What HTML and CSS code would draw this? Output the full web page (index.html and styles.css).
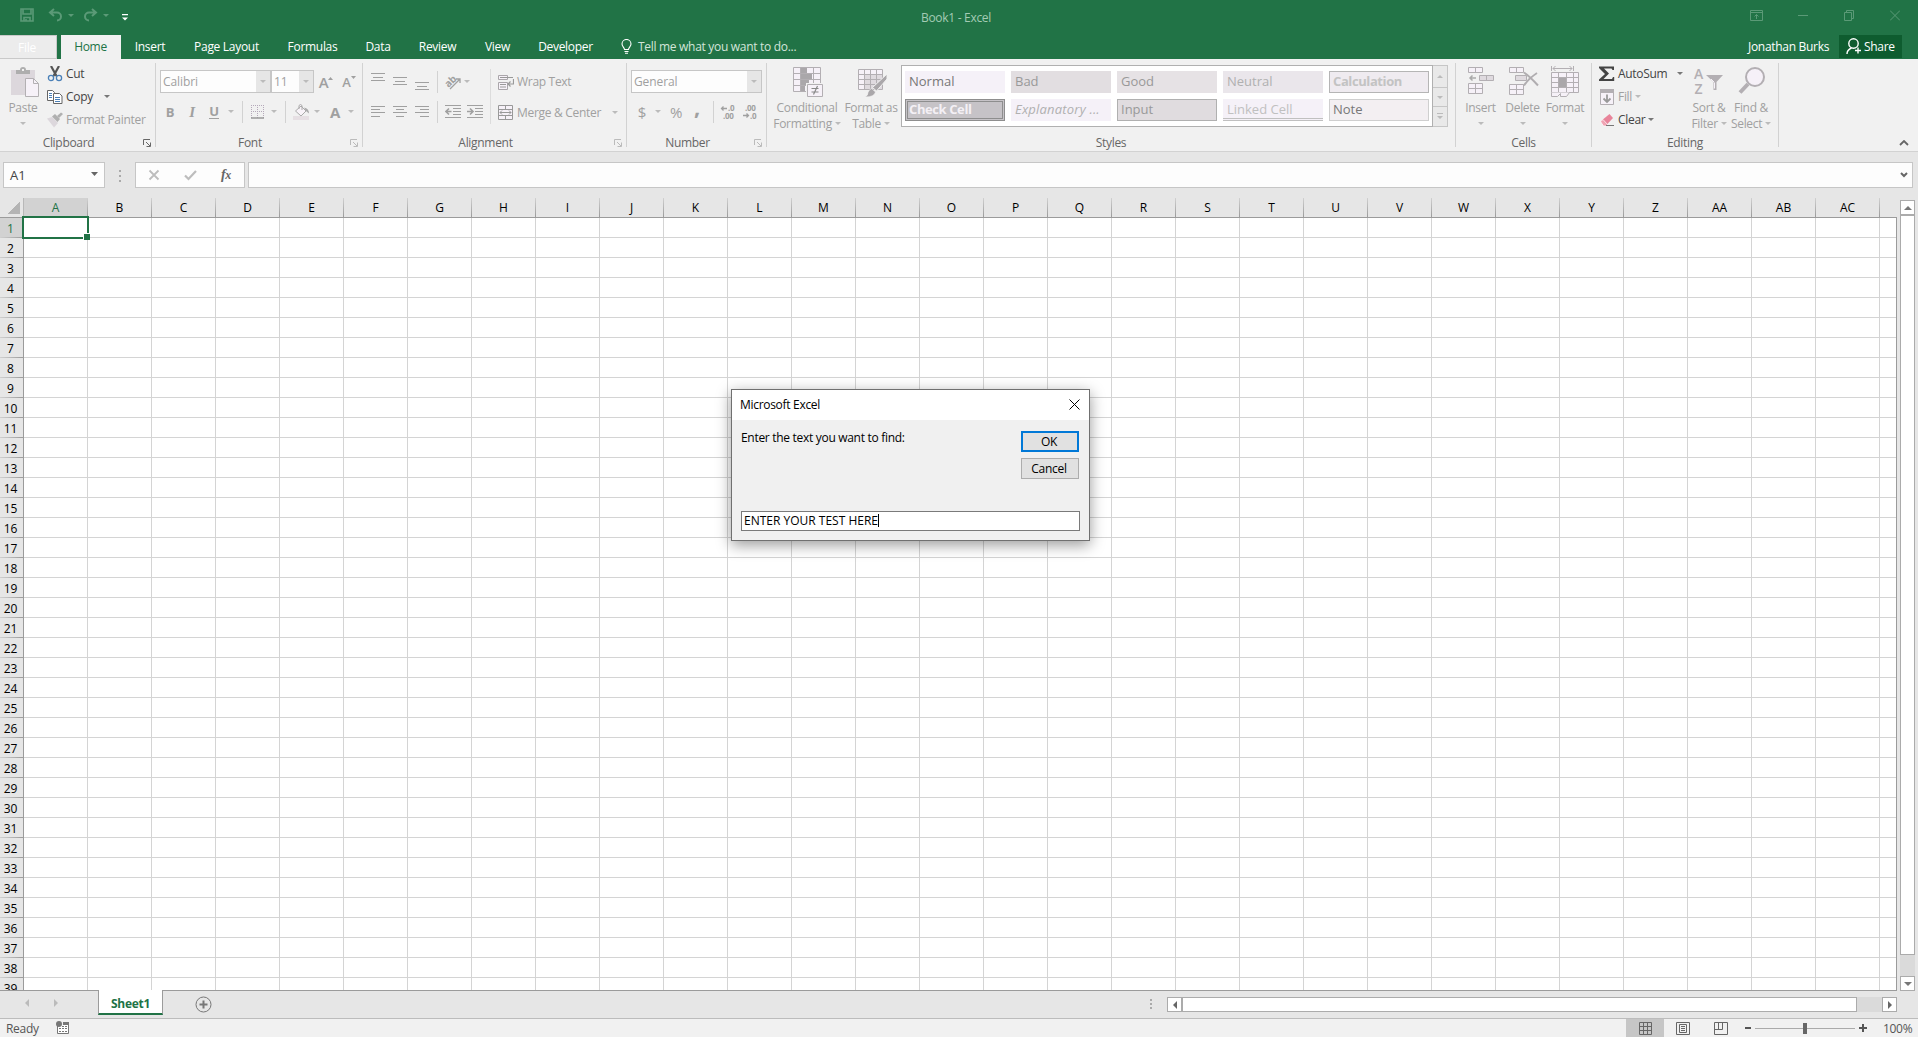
FILE: index.html
```html
<!DOCTYPE html>
<html lang="en">
<head>
  <meta charset="UTF-8">
  <meta name="viewport" content="width=device-width, initial-scale=1.0">
  <title>Book1 - Excel</title>
  <link rel="stylesheet" href="styles.css">
</head>
<body>

<header class="titlebar">
  <div class="quick">
    <svg width="14" height="14" viewBox="0 0 14 14"><path d="M1 1h12v12H1zM3 1v5h8V1M4 13V9.500h6V13M6 11v2" fill="none" stroke="currentColor" stroke-width="1.600"/></svg>
    <svg class="undo" width="15" height="14" viewBox="0 0 15 14"><path d="M6 1L2 4.500 6 8M2 4.500h7a4 4 0 0 1 0 8" fill="none" stroke="currentColor" stroke-width="2"/></svg>
    <i class="caret"></i>
    <svg class="redo" width="15" height="14" viewBox="0 0 15 14"><path d="M9 1l4 3.500L9 8M13 4.500H6a4 4 0 0 0 0 8" fill="none" stroke="currentColor" stroke-width="2"/></svg>
    <i class="caret"></i>
    <svg class="customize" width="6" height="7" viewBox="0 0 6 7"><path d="M0 0h6v1.200H0zM0 3.500h6L3 6.500z" fill="#fff"/></svg>
  </div>
  <div class="doc-title">Book1 - Excel</div>
  <div class="win-buttons">
    <svg class="ribbon-opts" width="14" height="11" viewBox="0 0 14 11"><path d="M.5.5h12v10H.5zM.5 2.500h12M6.500 9V4.500M4.500 6.500l2-2 2 2" fill="none" stroke="currentColor"/></svg>
    <svg width="10" height="11" viewBox="0 0 10 11"><path d="M0 5.500h10" stroke="currentColor"/></svg>
    <svg width="10" height="11" viewBox="0 0 10 11"><path d="M.5 2.500h7v8h-7zM2.500 2.500v-2h7v8h-2" fill="none" stroke="currentColor"/></svg>
    <svg width="10" height="11" viewBox="0 0 10 11"><path d="M0 .5l10 10M10 .5l-10 10" stroke="currentColor"/></svg>
  </div>
</header>

<nav class="tabs">
  <div class="tab-file">File</div>
  <div class="tab-list">
    <a class="active">Home</a>
    <a>Insert</a>
    <a>Page Layout</a>
    <a>Formulas</a>
    <a>Data</a>
    <a>Review</a>
    <a>View</a>
    <a>Developer</a>
  </div>
  <div class="tell-me">
    <svg width="11" height="15" viewBox="0 0 11 15"><path d="M3.500 10.500c0-2-2.500-3-2.500-5.500a4.500 4.500 0 0 1 9 0c0 2.500-2.500 3.500-2.500 5.500zM3.500 12.500h4M4 14.300h3" fill="none" stroke="#fff" stroke-width="1.100"/></svg>
    <span>Tell me what you want to do...</span>
  </div>
  <div class="user">Jonathan Burks</div>
  <div class="share">
    <svg width="16" height="17" viewBox="0 0 16 17"><circle cx="7.500" cy="5.500" r="4.700" fill="none" stroke="#fff" stroke-width="1.400"/><path d="M1 16c0-3 2-5 4.500-6M12 9.500v6M9 12.500h6" fill="none" stroke="#fff" stroke-width="1.400"/></svg>
    <span>Share</span>
  </div>
</nav>

<section class="ribbon">

  <div class="group g-clipboard">
    <div class="group-body">
      <div class="big disabled">
        <svg width="40" height="34" viewBox="0 0 40 34">
          <path d="M8 4h24v25H8z" fill="#dcd7dc"/>
          <path d="M13 4h4q0-3 3-3t3 3h4v4H13z" fill="#aeaeae"/><path d="M19 3h2v2h-2z" fill="#f1f1f1"/>
          <path d="M22.500 12.500h8l5 5v13h-13z" fill="#f6f1f8" stroke="#b3b0b3"/><path d="M30.500 12.500v5h5" fill="none" stroke="#b3b0b3"/>
        </svg>
        <span>Paste</span>
        <span><i class="caret"></i></span>
      </div>
      <div class="stack">
        <div class="item">
          <svg width="16" height="16" viewBox="0 0 16 16"><path d="M4 0l5.500 10M12 0L6.500 10" stroke="#555" stroke-width="2.200" fill="none"/><circle cx="4" cy="12" r="2.600" fill="none" stroke="#4a80b8" stroke-width="1.300"/><circle cx="12" cy="12" r="2.600" fill="none" stroke="#4a80b8" stroke-width="1.300"/></svg>
          <span>Cut</span>
        </div>
        <div class="item">
          <svg width="16" height="16" viewBox="0 0 16 16"><path d="M.5 1.500h5l2 2v8h-7z" fill="#fff" stroke="#666"/><path d="M2 4.500h3M2 6.500h3M2 8.500h3" stroke="#4a80b8"/><path d="M6.500 4.500h6l2.500 2.500v7.500H6.500z" fill="#fff" stroke="#666"/><path d="M8 8.500h5M8 10.500h5M8 12.500h5" stroke="#4a80b8"/></svg>
          <span>Copy</span>
          <i class="caret copy-caret"></i>
        </div>
        <div class="item disabled">
          <svg width="16" height="16" viewBox="0 0 16 16"><path d="M0 6.500l5-1.500 6 6-4 4.500z" fill="#dcd7dc"/><path d="M5 4.500l3-2.500 5 5-2.500 3z" fill="#b0b0b0"/><path d="M10 4l4-3.500L16 2l-4 4z" fill="#b0b0b0"/></svg>
          <span>Format Painter</span>
        </div>
      </div>
    </div>
    <div class="group-label"><span>Clipboard</span><svg class="launcher" width="8" height="8" viewBox="0 0 8 8"><path d="M.5 6V.5H7M3 3l4 4M7.500 3.500v4h-4" fill="none" stroke="currentColor"/></svg></div>
  </div>

  <div class="group g-font">
    <div class="group-body lines disabled">
      <div class="line font-line1">
        <div class="combo"><span>Calibri</span><b><i class="caret"></i></b></div>
        <div class="combo"><span>11</span><b><i class="caret"></i></b></div>
        <div class="glyph grow">A<svg width="5" height="3" viewBox="0 0 5 3"><path d="M0 3h5L2.500 0z" fill="currentColor"/></svg></div>
        <div class="glyph shrink">A<svg width="5" height="3" viewBox="0 0 5 3"><path d="M0 0h5L2.500 3z" fill="currentColor"/></svg></div>
      </div>
      <div class="line font-line2">
        <b class="glyph">B</b>
        <em class="glyph serif">I</em>
        <b class="glyph under">U</b>
        <i class="caret"></i>
        <i class="sep"></i>
        <svg width="13" height="14" viewBox="0 0 13 14"><path d="M.5 0v13M6.500 0v13M12.500 0v13M0 .5h13M0 6.500h13" stroke="#b5a9ba" stroke-dasharray="1 1"/><path d="M0 13h13" stroke="#999" stroke-width="1.500"/></svg>
        <i class="caret"></i>
        <i class="sep"></i>
        <svg width="17" height="16" viewBox="0 0 17 16"><path d="M0 12h16v4H0z" fill="#e6dfe3"/><path d="M2.500 7L8 2l5 5-5 5zM6 5V1.500q1.500-2 3 0V6" fill="#f8f3f8" stroke="#aaa"/><path d="M11 3.500q5 1 5 6l-3-2.500z" fill="#aaa"/></svg>
        <i class="caret"></i>
        <b class="glyph big-a">A</b>
        <i class="caret"></i>
      </div>
    </div>
    <div class="group-label"><span>Font</span><svg class="launcher dim" width="8" height="8" viewBox="0 0 8 8"><path d="M.5 6V.5H7M3 3l4 4M7.500 3.500v4h-4" fill="none" stroke="currentColor"/></svg></div>
  </div>

  <div class="group g-align">
    <div class="group-body disabled">
      <div class="lines align-left">
        <div class="line align-grid">
          <svg width="14" height="20" viewBox="0 0 14 20"><path d="M0 1.500h14M2 5.500h10M0 8.500h14" stroke="currentColor"/></svg>
          <svg width="14" height="20" viewBox="0 0 14 20"><path d="M0 5.500h14M2 9.500h10M0 12.500h14" stroke="currentColor"/></svg>
          <svg width="14" height="20" viewBox="0 0 14 20"><path d="M0 10.500h14M2 14.500h10M0 17.500h14" stroke="currentColor"/></svg>
          <i class="sep"></i>
          <svg class="orient" width="22" height="22" viewBox="-3 -3 22 22"><text x="-1" y="11" class="ab" transform="rotate(-45 5 7)">ab</text><path d="M5 15l10-10M15 9V5h-4" fill="none" stroke="currentColor" stroke-width="1.300"/></svg>
          <i class="caret orient-caret"></i>
        </div>
        <div class="line align-grid">
          <svg width="14" height="12" viewBox="0 0 14 12"><path d="M0 .5h14M0 3.500h9M0 6.500h14M0 10.500h9" stroke="currentColor"/></svg>
          <svg width="14" height="12" viewBox="0 0 14 12"><path d="M0 .5h14M3 3.500h8M0 6.500h14M3 10.500h8" stroke="currentColor"/></svg>
          <svg width="14" height="12" viewBox="0 0 14 12"><path d="M0 .5h14M5 3.500h9M0 6.500h14M5 10.500h9" stroke="currentColor"/></svg>
          <i class="sep"></i>
          <svg width="16" height="14" viewBox="0 0 16 14"><path d="M0 .5h16M8 3.500h8M8 6.500h8M8 9.500h8M0 12.500h16" stroke="currentColor"/><path d="M6.500 6.500H1M4 3.500l-3 3 3 3" fill="none" stroke="currentColor" stroke-width="1.600"/></svg>
          <svg width="16" height="14" viewBox="0 0 16 14"><path d="M0 .5h16M8 3.500h8M8 6.500h8M8 9.500h8M0 12.500h16" stroke="currentColor"/><path d="M0 6.500h5.500M3 3.500l3 3-3 3" fill="none" stroke="currentColor" stroke-width="1.600"/></svg>
        </div>
      </div>
      <div class="lines align-right">
        <div class="line item">
          <svg width="16" height="16" viewBox="0 0 16 16"><path d="M.5 1.500h9v4h-9zM.5 8.500h9v7h-9z" fill="#f6f1f8" stroke="#aaa6aa"/><path d="M2 3.500h13M2 10.500h6M2 13h6" stroke="#999"/><path d="M15.500 5v5h-5M12.500 7.500L10 10l2.500 2.500" fill="none" stroke="#999" stroke-width="1.200"/></svg>
          <span>Wrap Text</span>
        </div>
        <div class="line item">
          <svg width="16" height="16" viewBox="0 0 16 16"><path d="M.5.500h14v14H.5z" fill="#f6f1f8" stroke="#999"/><path d="M.5 4.500h14M.5 10.500h14M7.500.5v4M7.500 10.500v4M2 7.500h11M4 5.500l-2 2 2 2M11 5.500l2 2-2 2" fill="none" stroke="#999"/></svg>
          <span class="merge-text">Merge &amp; Center</span>
          <i class="caret"></i>
        </div>
      </div>
    </div>
    <div class="group-label"><span>Alignment</span><svg class="launcher dim" width="8" height="8" viewBox="0 0 8 8"><path d="M.5 6V.5H7M3 3l4 4M7.500 3.500v4h-4" fill="none" stroke="currentColor"/></svg></div>
  </div>

  <div class="group g-number">
    <div class="group-body lines disabled">
      <div class="line number-line1">
        <div class="combo"><span>General</span><b><i class="caret"></i></b></div>
      </div>
      <div class="line number-line2">
        <span class="glyph dollar">$</span>
        <i class="caret"></i>
        <span class="glyph percent">%</span>
        <b class="glyph comma">,</b>
        <i class="sep"></i>
        <svg width="20" height="22" viewBox="-3 -4 20 22"><path d="M6 3.500H.5M2.500 1.500l-2 2 2 2" fill="none" stroke="currentColor" stroke-width="1.300"/><text x="7" y="6" class="dec">.0</text><text x="2" y="13.500" class="dec">.00</text></svg>
        <svg width="20" height="22" viewBox="-3 -4 20 22"><text x="2" y="6" class="dec">.00</text><path d="M0 10.500h5.500M3.500 8.500l2 2-2 2" fill="none" stroke="currentColor" stroke-width="1.300"/><text x="7" y="13.500" class="dec">.0</text></svg>
      </div>
    </div>
    <div class="group-label"><span>Number</span><svg class="launcher dim" width="8" height="8" viewBox="0 0 8 8"><path d="M.5 6V.5H7M3 3l4 4M7.500 3.500v4h-4" fill="none" stroke="currentColor"/></svg></div>
  </div>

  <div class="group g-styles">
    <div class="group-body">
      <div class="big disabled">
        <svg width="76" height="34" viewBox="0 0 76 34">
          <path d="M24.500 1.500h27v24h-27z" fill="#f6f1f8" stroke="#b3afb3"/>
          <path d="M24.500 7.500h27M24.500 13.500h27M24.500 19.500h27M31.500 1.500v24M37.500 1.500v24M44.500 1.500v24" stroke="#b3afb3"/>
          <path d="M32 2h6v5h-6zM32 8h11v5H32zM32 14h8v5h-8zM32 20h4v5h-4z" fill="#aaa7aa"/>
          <path d="M38.500 18.500h15v12h-15z" fill="#f6f1f8" stroke="#f1f1f1" stroke-width="3"/>
          <path d="M38.500 18.500h15v12h-15z" fill="#f6f1f8" stroke="#b3afb3"/>
          <path d="M42.500 22.500h7M42.500 26h7M48.500 20l-4 8.500" stroke="#888" stroke-width="1.200"/>
        </svg>
        <span>Conditional</span>
        <span>Formatting <i class="caret"></i></span>
      </div>
      <div class="big table-btn disabled">
        <svg width="52" height="34" viewBox="0 0 52 34">
          <path d="M13.500 3.500h24v20h-24z" fill="#f6f1f8" stroke="#b3afb3"/>
          <path d="M20 9h17v14H20z" fill="#dfdadf"/>
          <path d="M13.500 8.500h24M13.500 13.500h24M13.500 18.500h24M19.500 3.500v20M25.500 3.500v20M31.500 3.500v20" stroke="#b3afb3"/>
          <path d="M42 8v5L31.500 25l-4-3.500z" fill="#aaa7aa" stroke="#f1f1f1"/>
          <path d="M26.500 22.500l4 3.500q-1 5-10.500 5 3-1.500 3-4.500 1-3 3.500-4z" fill="#aaa7aa" stroke="#f1f1f1" stroke-width=".6"/>
        </svg>
        <span>Format as</span>
        <span>Table <i class="caret"></i></span>
      </div>
      <div class="gallery">
        <div class="swatches">
          <div class="sw normal">Normal</div>
          <div class="sw bad">Bad</div>
          <div class="sw good">Good</div>
          <div class="sw neutral">Neutral</div>
          <div class="sw calculation">Calculation</div>
          <div class="sw check">Check Cell</div>
          <div class="sw explanatory">Explanatory ...</div>
          <div class="sw input">Input</div>
          <div class="sw linked">Linked Cell</div>
          <div class="sw note">Note</div>
        </div>
        <div class="gallery-scroll">
          <div><i class="caret up"></i></div>
          <div><i class="caret"></i></div>
          <div><svg width="6" height="7" viewBox="0 0 6 7"><path d="M0 0h6v1H0zM0 3h6L3 6z" fill="#bbb"/></svg></div>
        </div>
      </div>
    </div>
    <div class="group-label"><span>Styles</span></div>
  </div>

  <div class="group g-cells">
    <div class="group-body disabled">
      <div class="big insert-btn">
        <svg width="41" height="34" viewBox="0 0 41 34" fill="#f6f1f8" stroke="#b3afb3">
          <path d="M8.500 1.500h14v5h-14zM15.500 1.500v5"/>
          <path d="M19.500 9.500h14v5h-14zM26.500 9.500v5" fill="#dfdadf"/>
          <path d="M16 12H10M12.500 9.500L10 12l2.500 2.500" fill="none" stroke="#aaa" stroke-width="1.500"/>
          <path d="M8.500 17.500h14v10h-14zM15.500 17.500v10M8.500 22.500h14"/>
        </svg>
        <span>Insert</span>
        <span><i class="caret"></i></span>
      </div>
      <div class="big delete-btn">
        <svg width="43" height="34" viewBox="0 0 43 34" fill="#f6f1f8" stroke="#b3afb3">
          <path d="M8.500 1.500h14v5h-14zM15.500 1.500v5"/>
          <path d="M14.500 9.500h11v5h-11z" fill="#dfdadf"/>
          <path d="M8.500 18.500h14v10h-14zM15.500 18.500v10M8.500 23.500h14"/>
          <path d="M23 6.500q6 4 14 13M36 7q-8 5-13 12.500" fill="none" stroke="#b0adb0" stroke-width="2"/>
        </svg>
        <span>Delete</span>
        <span><i class="caret"></i></span>
      </div>
      <div class="big format-btn">
        <svg width="42" height="34" viewBox="0 0 42 34" fill="#f6f1f8" stroke="#b3afb3">
          <path d="M7.500 0v5M29.500 0v5M9 2.500h19M11.500 0L9 2.500 11.500 5M25.500 0L28 2.500 25.500 5" fill="none"/>
          <path d="M7.500 6.500h27v20h-27zM7.500 11.500h27M7.500 21.500h27M14.500 6.500v20M22.500 6.500v20M29.500 6.500v20M7.500 16.500h27"/>
          <path d="M15 12h7v9h-7z" fill="#aaa7aa" stroke="none"/>
          <path d="M7.500 26.500v4h6l3-3v3h6l3-4" />
        </svg>
        <span>Format</span>
        <span><i class="caret"></i></span>
      </div>
    </div>
    <div class="group-label"><span>Cells</span></div>
  </div>

  <div class="group g-editing">
    <div class="group-body">
      <div class="stack">
        <div class="item">
          <svg width="16" height="16" viewBox="0 0 16 16"><path d="M0 .5h15v3.500h-1.500L12.500 2.500H5l5 5L4.500 13H13l1-2h1.200v4H0v-1.500L6 8 0 2z" fill="#444"/></svg>
          <span>AutoSum</span>
          <i class="caret sum-caret"></i>
        </div>
        <div class="item disabled">
          <svg width="16" height="16" viewBox="0 0 16 16"><path d="M1.500.5h13v15h-13z" fill="#f6f1f8" stroke="#b3afb3"/><path d="M1 0h14v4H1z" fill="#b3afb3"/><path d="M8 5.500v7M4.500 9.500L8 13l3.500-3.500" fill="none" stroke="#999" stroke-width="1.800"/></svg>
          <span>Fill</span>
          <i class="caret"></i>
        </div>
        <div class="item">
          <svg width="16" height="16" viewBox="0 0 16 16"><path d="M2 9l8.500-7 3.500 4-7 7.500z" fill="#e8849a"/><path d="M1.500 9.500l2.500-2 4.500 5L7 14H4.500z" fill="#f0a3b3" stroke="#fff" stroke-width=".7"/><path d="M7 13.500h8" stroke="#777"/></svg>
          <span>Clear</span>
          <i class="caret"></i>
        </div>
      </div>
      <div class="big sort-btn disabled">
        <svg width="38" height="34" viewBox="0 0 38 34">
          <text x="4" y="13" class="az">A</text><text x="4.500" y="28" class="az">Z</text>
          <path d="M16 9h17l-6.500 7v8h-3v-8z" fill="#b3afb3"/><path d="M24.500 16.500v6M21 13l3 3" stroke="#f6f1f8"/>
        </svg>
        <span>Sort &amp;</span>
        <span>Filter <i class="caret"></i></span>
      </div>
      <div class="big find-btn disabled">
        <svg width="44" height="34" viewBox="0 0 44 34">
          <circle cx="26" cy="11" r="9" fill="#f6f1f8" stroke="#b3afb3" stroke-width="2"/><path d="M19 18l-8 8.500" stroke="#b3afb3" stroke-width="4"/>
        </svg>
        <span>Find &amp;</span>
        <span>Select <i class="caret"></i></span>
      </div>
    </div>
    <div class="group-label"><span>Editing</span></div>
  </div>

  <svg class="collapse" width="10" height="6" viewBox="0 0 10 6"><path d="M1 5l4-4 4 4" fill="none" stroke="#666" stroke-width="1.800"/></svg>
</section>

<section class="formula-bar">
  <div class="name-box"><span>A1</span><svg width="7" height="4" viewBox="0 0 7 4"><path d="M0 0h7L3.500 4z" fill="#666"/></svg></div>
  <div class="dots"><i></i><i></i><i></i></div>
  <div class="fx-buttons">
    <svg width="12" height="12" viewBox="0 0 12 12"><path d="M1.500 1.500l9 9M10.500 1.500l-9 9" stroke="#bdbdbd" stroke-width="1.800"/></svg>
    <svg width="13" height="12" viewBox="0 0 13 12"><path d="M1 6.500l3.500 3.500L12 2" fill="none" stroke="#bdbdbd" stroke-width="2.200"/></svg>
    <span class="fx">f<small>x</small></span>
  </div>
  <div class="formula-input"><svg width="8" height="6" viewBox="0 0 8 6"><path d="M1 1l3 3 3-3" fill="none" stroke="#666" stroke-width="2"/></svg></div>
</section>

<main class="workspace">
  <div class="sheet">
    <div class="col-heads" id="cols"><div class="corner"></div></div>
    <div class="sheet-body">
      <div class="row-heads" id="rows"></div>
      <div class="cells"><div class="selection"></div></div>
    </div>
  </div>
  <div class="vscroll">
    <div class="sb-btn"><i class="caret up"></i></div>
    <div class="v-thumb"></div>
    <div class="sb-btn v-down"><i class="caret"></i></div>
  </div>
</main>

<section class="sheet-bar">
  <svg class="nav-prev" width="4" height="8" viewBox="0 0 4 8"><path d="M4 0v8L0 4z" fill="#bbb"/></svg>
  <svg class="nav-next" width="4" height="8" viewBox="0 0 4 8"><path d="M0 0v8l4-4z" fill="#bbb"/></svg>
  <div class="sheet-tab">Sheet1</div>
  <svg class="add-sheet" width="17" height="17" viewBox="0 0 17 17"><circle cx="8.500" cy="8.500" r="7.500" fill="none" stroke="#777"/><path d="M8.500 4.500v8M4.500 8.500h8" stroke="#777" stroke-width="2"/></svg>
  <div class="dots sheet-dots"><i></i><i></i><i></i></div>
  <div class="hscroll">
    <div class="sb-btn"><svg width="4" height="8" viewBox="0 0 4 8"><path d="M4 0v8L0 4z" fill="#666"/></svg></div>
    <div class="h-thumb"></div>
    <div class="sb-btn h-right"><svg width="4" height="8" viewBox="0 0 4 8"><path d="M0 0v8l4-4z" fill="#666"/></svg></div>
  </div>
</section>

<footer class="status">
  <span class="ready">Ready</span>
  <svg class="macro" width="14" height="13" viewBox="0 0 14 13"><path d="M1.500 5v7.500h11V4" fill="#fff" stroke="#777"/><path d="M7 1h6v3H7z" fill="#777"/><path d="M3 7.500h2M6 7.500h2M9 7.500h2M3 10.500h2M6 10.500h2M9 10.500h2M6 5.500h2M9 5.500h2" stroke="#777"/><circle cx="3" cy="3" r="3" fill="#777"/></svg>
  <div class="views">
    <div class="view on"><svg width="13" height="13" viewBox="0 0 13 13"><path d="M.5.5h12v12H.5zM4.500.5v12M8.500.5v12M.5 4.500h12M.5 8.500h12" fill="none" stroke="#666"/></svg></div>
    <div class="view"><svg width="14" height="13" viewBox="0 0 14 13"><path d="M.5.5h13v12H.5zM3.500 2.500h7v8h-7zM5 4.500h4M5 6.500h4M5 8.500h4" fill="none" stroke="#666"/></svg></div>
    <div class="view"><svg width="14" height="13" viewBox="0 0 14 13"><path d="M.5.5h13v12H.5zM.5 7.500h8v-7M4.500.5v7" fill="none" stroke="#666"/></svg></div>
  </div>
  <div class="zoom">
    <i class="minus"></i>
    <div class="slider"><i></i></div>
    <svg width="8" height="8" viewBox="0 0 8 8"><path d="M4 0v8M0 4h8" stroke="#555" stroke-width="2"/></svg>
    <span>100%</span>
  </div>
</footer>

<div class="dialog">
  <div class="dialog-title">
    <span>Microsoft Excel</span>
    <svg width="11" height="11" viewBox="0 0 11 11"><path d="M.5.5l10 10M10.500.5l-10 10" stroke="#000"/></svg>
  </div>
  <div class="dialog-body">
    <div class="dialog-top">
      <div class="prompt">Enter the text you want to find:</div>
      <div class="dialog-buttons">
        <button class="default">OK</button>
        <button>Cancel</button>
      </div>
    </div>
    <div class="dialog-input"><span>ENTER YOUR TEST HERE</span></div>
  </div>
</div>

<script>
  const cols = document.getElementById('cols');
  const rows = document.getElementById('rows');

  function colName(n) {
    const letter = String.fromCharCode(65 + n % 26);
    return n < 26 ? letter : 'A' + letter;
  }

  for (let i = 0; i < 29; i++) {
    cols.innerHTML += `<div class="col-head${i === 0 ? ' on' : ''}">${colName(i)}</div>`;
  }

  for (let i = 1; i <= 39; i++) {
    rows.innerHTML += `<div class="row-head${i === 1 ? ' on' : ''}">${i}</div>`;
  }
</script>

</body>
</html>
```
FILE: styles.css
```css
* {
  box-sizing: border-box;
}
body {
  margin: 0;
  width: 1918px;
  height: 1037px;
  overflow: hidden;
  display: flex;
  flex-direction: column;
  font-family: "Open Sans", "Noto Sans", sans-serif;
  font-size: 12px;
  letter-spacing: -0.3px;
  color: #444;
  background: #e6e6e6;
  white-space: nowrap;
}
svg {
  display: block;
  flex: none;
}
.caret {
  display: inline-block;
  flex: none;
  width: 0;
  height: 0;
  border-left: 3px solid transparent;
  border-right: 3px solid transparent;
  border-top: 3px solid #777;
}
.caret.up {
  border-top: 0;
  border-bottom: 3px solid #777;
}
.disabled {
  color: #a0a0a0;
}
.disabled .caret,
.gallery .caret {
  border-top-color: #bbb;
}
.gallery .caret.up {
  border-bottom-color: #bbb;
}

/* title bar */
.titlebar {
  height: 35px;
  background: #217346;
  display: grid;
  grid-template-columns: 1fr auto 1fr;
  color: #5b9a77;
}
.quick {
  display: flex;
  align-items: center;
  padding: 0 0 5px 20px;
}
.quick .caret {
  border-top-color: #5b9a77;
  margin-left: 5px;
}
.undo {
  margin-left: 14px;
}
.redo {
  margin-left: 9px;
}
.customize {
  margin: 4px 0 0 13px;
}
.doc-title {
  color: #a3cbb4;
  line-height: 35px;
  padding-right: 6px;
}
.win-buttons {
  display: flex;
  justify-content: flex-end;
  align-items: flex-start;
  gap: 36px;
  padding: 10px 18px 0 0;
}
.ribbon-opts {
  margin-right: -2px;
}

/* tabs */
.tabs {
  height: 24px;
  background: #217346;
  display: flex;
  line-height: 24px;
  color: #fff;
}
.tab-file {
  width: 57px;
  background: #ececec;
  border: 1px solid #c9c9c9;
  border-left: 0;
  text-align: center;
  padding-right: 2px;
}
.tab-list {
  margin-left: 4px;
  display: grid;
  grid-template-columns: 60px 59px 94px 78px 53px 66px 54px 82px;
  text-align: center;
}
.tab-list a {
  padding-right: 1px;
}
.tab-list .active {
  background: #f1f1f1;
  color: #217346;
}
.tell-me {
  display: flex;
  align-items: center;
  gap: 6px;
  padding-left: 14px;
  color: #d3e5da;
}
.tell-me svg {
  margin-bottom: 2px;
}
.user {
  margin-left: auto;
  width: 91px;
}
.share {
  width: 63px;
  height: 23px;
  margin-right: 16px;
  background: #0e5c2f;
  display: flex;
  align-items: center;
  gap: 2px;
  padding-left: 7px;
}

/* ribbon */
.ribbon {
  height: 93px;
  background: #f1f1f1;
  border-bottom: 1px solid #d2d2d2;
  display: flex;
  padding: 4px 0;
}
.group {
  border-right: 1px solid #d2d2d2;
  display: flex;
  flex-direction: column;
}
.g-clipboard { width: 156px; }
.g-font { width: 207px; }
.g-align { width: 264px; }
.g-number { width: 140px; }
.g-styles { width: 689px; }
.g-cells { width: 136px; }
.g-editing { width: 187px; }
.group-body {
  height: 71px;
  display: flex;
}
.group-label {
  height: 14px;
  line-height: 19px;
  display: flex;
  justify-content: center;
  color: #666;
}
.group-label span {
  flex: 1;
  text-align: center;
}
.launcher {
  margin: 6px 4px 0 6px;
}
.launcher.dim {
  color: #bbb;
}
.big {
  width: 76px;
  margin-top: 3px;
  display: flex;
  flex-direction: column;
  align-items: center;
  line-height: 16px;
}
.big span {
  height: 16px;
}
.big .caret {
  vertical-align: 3px;
}
.g-clipboard .group-body {
  padding-left: 3px;
  gap: 4px;
}
.g-clipboard .big {
  width: 40px;
}
.stack {
  margin-top: -1px;
}
.item {
  height: 23px;
  display: flex;
  align-items: center;
  gap: 3px;
}
.item span {
  margin-top: -1px;
}
.copy-caret {
  margin-left: 8px;
}

.lines {
  flex-direction: column;
  display: flex;
  gap: 7px;
  padding-top: 7px;
}
.line {
  height: 23px;
  display: grid;
  align-items: center;
  justify-items: center;
}
.line.item {
  display: flex;
}
.sep {
  width: 1px;
  height: 22px;
  background: #d2d2d2;
}
.combo {
  width: 100%;
  height: 23px;
  background: #fdfdfd;
  border: 1px solid #c6c6c6;
  display: flex;
  align-items: center;
  justify-content: space-between;
  padding-left: 2px;
}
.combo span {
  letter-spacing: -0.1px;
}
.combo b {
  width: 14px;
  height: 21px;
  background: #e6e6e6;
  display: flex;
  align-items: center;
  justify-content: center;
}
.font-line1 {
  padding-left: 4px;
  grid-template-columns: 111px 43px 24px 22px;
}
.font-line2 {
  padding-left: 3px;
  grid-template-columns: 22px 22px 22px 12px 10px 21px 12px 10px 23px 8px 28px 4px;
}
.glyph {
  font-size: 13px;
  line-height: 20px;
}
.glyph svg {
  display: inline-block;
  vertical-align: 8px;
}
.grow {
  font-size: 15px;
  font-weight: 600;
}
.shrink {
  font-size: 13px;
  font-weight: 600;
}
.serif {
  font-family: "Liberation Serif", serif;
  font-weight: bold;
  font-size: 15px;
}
.under {
  line-height: 13px;
  border-bottom: 1px solid #a0a0a0;
}
.big-a {
  font-size: 15px;
}
.ab {
  font-size: 10px;
  font-weight: bold;
  fill: currentColor;
}
.align-left {
  width: 127px;
  padding-left: 4px;
}
.align-grid {
  grid-template-columns: 22px 22px 22px 9px 22px 22px;
}
.orient-caret {
  justify-self: start;
}
.align-right {
  margin-top: 6px;
  padding: 1px 0 0 7px;
  height: 55px;
  gap: 8px;
  border-left: 1px solid #dcdcdc;
}
.merge-text {
  width: 92px;
}
.number-line1 {
  padding-left: 4px;
  grid-template-columns: 131px;
}
.number-line2 {
  padding-left: 4px;
  grid-template-columns: 22px 10px 26px 16px 16px 14px 30px;
}
.dollar,
.percent {
  font-size: 15px;
}
.comma {
  font-size: 22px;
  margin-top: -12px;
}
.dec {
  font-size: 8px;
  font-weight: bold;
  fill: currentColor;
}

.g-styles .group-body {
  padding-left: 2px;
}
.table-btn {
  width: 52px;
}
.gallery {
  margin: 2px 0 0 4px;
  height: 62px;
  display: flex;
}
.swatches {
  width: 532px;
  background: #fff;
  border: 1px solid #b0b0b0;
  padding: 5px 3px;
  display: grid;
  grid-template-columns: repeat(5, 100px);
  grid-auto-rows: 22px;
  gap: 6px;
}
.sw {
  font-size: 13px;
  letter-spacing: 0;
  line-height: 21px;
  padding-left: 4px;
  background: #f5f1f8;
  color: #b0b0b0;
}
.sw.normal {
  color: #777;
}
.sw.bad {
  background: #e2dee1;
  color: #999;
}
.sw.good {
  background: #e6e2e5;
  color: #999;
}
.sw.neutral {
  background: #eae6eb;
}
.sw.calculation {
  background: #efebf0;
  border: 1px solid #b5b5b5;
  line-height: 19px;
  padding-left: 3px;
  font-weight: bold;
  letter-spacing: -0.4px;
  color: #c3c3c3;
}
.sw.check {
  background: #c6c3c7;
  border: 3px double #8e8e8e;
  line-height: 15px;
  padding-left: 1px;
  font-weight: bold;
  letter-spacing: -0.4px;
  color: #f4f0f5;
}
.sw.explanatory {
  font-style: italic;
  letter-spacing: 0.2px;
}
.sw.input {
  background: #e0dcdf;
  border: 1px solid #b0b0b0;
  line-height: 19px;
  padding-left: 3px;
  color: #999;
}
.sw.linked {
  border-bottom: 3px double #c0c0c0;
  color: #c0c0c0;
}
.sw.note {
  background: #f3eff2;
  border: 1px solid #cfcfcf;
  line-height: 19px;
  padding-left: 3px;
  color: #777;
}
.gallery-scroll {
  width: 15px;
  border: 1px solid #c6c6c6;
  border-left: 0;
  background: #e9e9e9;
  display: grid;
  grid-template-rows: 21px 19px 20px;
}
.gallery-scroll div {
  display: flex;
  align-items: center;
  justify-content: center;
}
.gallery-scroll div + div {
  border-top: 1px solid #c6c6c6;
}

.g-cells .group-body {
  padding-left: 4px;
}
.insert-btn { width: 41px; }
.delete-btn { width: 43px; }
.format-btn { width: 42px; }
.g-editing .group-body {
  padding-left: 7px;
}
.g-editing .stack {
  width: 91px;
}
.sum-caret {
  margin-left: 7px;
}
.sort-btn {
  width: 38px;
  margin-right: 1px;
}
.find-btn {
  width: 44px;
}
.az {
  font-size: 14px;
  font-weight: 600;
  fill: #b3afb3;
}
.collapse {
  margin: auto 9px 1px auto;
}

/* formula bar */
.formula-bar {
  height: 46px;
  display: flex;
  align-items: flex-start;
  padding: 10px 5px 0 3px;
}
.name-box,
.fx-buttons,
.formula-input {
  height: 26px;
  background: #fdfdfd;
  border: 1px solid #c6c6c6;
  display: flex;
  align-items: center;
}
.name-box {
  width: 102px;
  justify-content: space-between;
  padding: 0 6px;
  font-size: 13px;
  letter-spacing: 0;
}
.name-box svg {
  margin-top: -3px;
}
.dots {
  width: 2px;
  display: grid;
  gap: 3px;
}
.dots i {
  width: 2px;
  height: 2px;
  background: #aaa;
}
.formula-bar .dots {
  margin: 8px 14px 0;
}
.fx-buttons {
  width: 110px;
  display: grid;
  grid-template-columns: 36px 36px 36px;
  justify-items: center;
}
.fx {
  font-family: "Liberation Serif", serif;
  font-style: italic;
  font-weight: bold;
  font-size: 14px;
  line-height: 20px;
  color: #666;
}
.fx small {
  font-size: 12px;
}
.formula-input {
  flex: 1;
  margin-left: 3px;
  justify-content: flex-end;
  padding-right: 4px;
}

/* grid */
.workspace {
  height: 793px;
  display: flex;
}
.sheet {
  width: 1897px;
  height: 793px;
  border-bottom: 1px solid #9b9b9b;
}
.col-heads {
  height: 20px;
  display: flex;
  border-bottom: 1px solid #9b9b9b;
  color: #000;
  letter-spacing: 0;
}
.corner {
  width: 24px;
  border-right: 1px solid #b8b8b8;
  background: linear-gradient(135deg, transparent 50%, #b4b4b4 50%) 8px 4px / 12px 12px no-repeat;
}
.col-head {
  width: 64px;
  line-height: 20px;
  padding-right: 1px;
  text-align: center;
  background: linear-gradient(#d0d0d0, #9b9b9b) right / 1px 100% no-repeat;
}
.col-head:last-child {
  box-sizing: border-box;
}
.col-head.on {
  background-color: #d2d2d2;
  color: #217346;
}
.sheet-body {
  height: 772px;
  display: flex;
  overflow: hidden;
}
.row-heads {
  width: 24px;
  border-right: 1px solid #9b9b9b;
  color: #000;
  letter-spacing: 0;
}
.row-head {
  height: 20px;
  line-height: 22px;
  text-align: center;
  padding-right: 2px;
  background: linear-gradient(90deg, #d0d0d0, #9b9b9b) bottom / 100% 1px no-repeat;
}
.row-head.on {
  background-color: #d2d2d2;
  color: #217346;
}
.cells {
  flex: 1;
  background-color: #fff;
  background-image:
    repeating-linear-gradient(90deg, transparent 0 63px, #d4d4d4 63px 64px),
    repeating-linear-gradient(transparent 0 19px, #d4d4d4 19px 20px);
  border-right: 1px solid #9b9b9b;
}
.selection {
  position: absolute;
  left: 22px;
  top: 216px;
  width: 67px;
  height: 23px;
  border: 2px solid #217346;
}
.selection::after {
  content: "";
  position: absolute;
  right: -3px;
  bottom: -3px;
  width: 6px;
  height: 6px;
  background: #217346;
  border-left: 1px solid #fff;
  border-top: 1px solid #fff;
}
.vscroll {
  width: 15px;
  height: 791px;
  margin: 2px 0 0 3px;
  background: #dadada;
  display: flex;
  flex-direction: column;
}
.sb-btn {
  width: 15px;
  height: 15px;
  background: #fff;
  border: 1px solid #ababab;
  display: flex;
  align-items: center;
  justify-content: center;
}
.sb-btn .caret {
  border-left-width: 4px;
  border-right-width: 4px;
  border-top-width: 4px;
}
.sb-btn .caret.up {
  border-top-width: 0;
  border-bottom-width: 4px;
}
.v-thumb {
  height: 740px;
  background: #fff;
  border: 1px solid #ababab;
}
.v-down {
  margin-top: auto;
}

/* sheet tabs */
.sheet-bar {
  height: 28px;
  border-bottom: 1px solid #bcbcbc;
  display: flex;
}
.nav-prev {
  margin: 8px 0 0 25px;
}
.nav-next {
  margin: 8px 0 0 25px;
}
.sheet-tab {
  width: 65px;
  height: 25px;
  margin: -1px 0 0 40px;
  background: #fff;
  border: 1px solid #9b9b9b;
  border-top: 0;
  border-bottom: 2px solid #217346;
  color: #217346;
  font-weight: bold;
  line-height: 28px;
  text-align: center;
}
.add-sheet {
  margin: 5px 0 0 32px;
}
.sheet-dots {
  height: 10px;
  gap: 2px;
  margin: 8px 15px 0 auto;
}
.hscroll {
  width: 730px;
  height: 15px;
  margin: 6px 21px 0 0;
  background: #dadada;
  display: flex;
}
.h-thumb {
  width: 675px;
  background: #fff;
  border: 1px solid #ababab;
}
.h-right {
  margin-left: auto;
}

/* status bar */
.status {
  height: 18px;
  background: #f1f1f1;
  display: flex;
  align-items: center;
  color: #555;
}
.ready {
  width: 49px;
  padding-left: 6px;
}
.macro {
  margin: 0 0 1px 7px;
}
.views {
  margin-left: auto;
  margin-right: 5px;
  height: 18px;
  display: flex;
}
.view {
  width: 38px;
  display: flex;
  align-items: center;
  justify-content: center;
  padding-top: 1px;
}
.view.on {
  background: #c6c6c6;
}
.zoom {
  width: 173px;
  display: flex;
  align-items: center;
}
.minus {
  width: 6px;
  height: 2px;
  background: #555;
}
.slider {
  width: 100px;
  height: 11px;
  margin: 0 4px;
  background: linear-gradient(#aaa, #aaa) center / 100% 1px no-repeat;
}
.slider i {
  display: block;
  width: 4px;
  height: 11px;
  margin-left: 48px;
  background: #666;
}
.zoom span {
  margin-left: 16px;
}

/* input dialog */
.dialog {
  position: absolute;
  left: 731px;
  top: 389px;
  width: 359px;
  height: 152px;
  background: #f0f0f0;
  border: 1px solid #707070;
  box-shadow: 0 4px 14px rgba(0,0,0,0.4);
  color: #000;
}
.dialog-title {
  height: 30px;
  background: #fff;
  display: flex;
  align-items: center;
  justify-content: space-between;
  padding: 0 9px 2px 8px;
}
.dialog-body {
  padding: 11px 9px 0;
}
.dialog-top {
  height: 80px;
  display: flex;
  justify-content: space-between;
}
.prompt {
  line-height: 14px;
}
.dialog-buttons {
  display: grid;
  grid-auto-rows: 21px;
  gap: 6px;
  height: 48px;
  margin-right: 1px;
}
button {
  width: 58px;
  padding: 0 2px 0 0;
  background: #e1e1e1;
  border: 1px solid #adadad;
  font: inherit;
  letter-spacing: inherit;
  color: #000;
}
button.default {
  border: 2px solid #0078d7;
}
.dialog-input {
  width: 339px;
  height: 20px;
  background: #fff;
  border: 1px solid #7a7a7a;
  padding-left: 2px;
  line-height: 18px;
  letter-spacing: 0;
}
.dialog-input span {
  display: inline-block;
  height: 13px;
  line-height: 13px;
  border-right: 1px solid #000;
}
```
